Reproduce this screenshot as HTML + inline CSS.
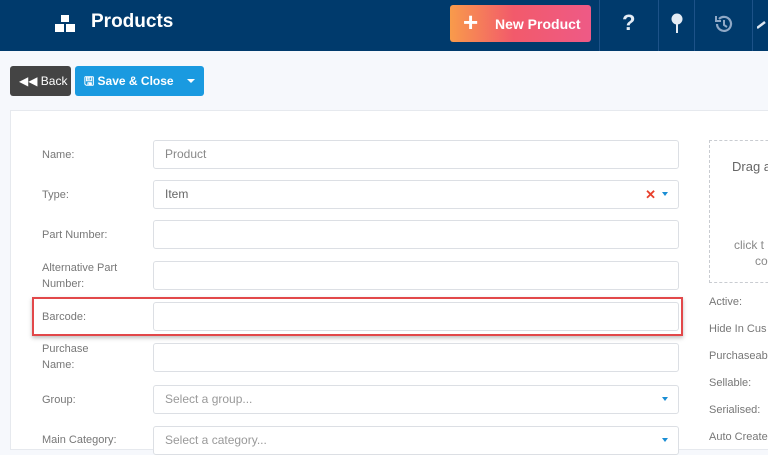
<!DOCTYPE html>
<html><head><style>
*{box-sizing:border-box;margin:0;padding:0}
body{width:768px;height:441px;overflow:hidden;background:#f6f8fc;font-family:"Liberation Sans",sans-serif;position:relative}
.hdr{position:absolute;left:0;top:0;width:768px;height:51px;background:#003a6c}
.title{position:absolute;left:91px;top:11px;color:#fff;font-size:19px;font-weight:bold}
.np{position:absolute;left:450px;top:5px;width:141px;height:37px;border-radius:3px;background:linear-gradient(90deg,#f89b4b,#f25a6b 45%,#ee5a86);color:#fff;font-weight:bold;font-size:14px}
.sep{position:absolute;top:0;width:1px;height:51px;background:#1d5288}
.btn{position:absolute;top:66px;height:30px;border-radius:3px;color:#fff;font-size:12px;font-weight:bold;line-height:30px}
.card{position:absolute;left:10px;top:110px;width:770px;height:340px;background:#fff;border:1px solid #e6e9ee}
.lbl{position:absolute;left:42px;color:#777;font-size:11px;line-height:16px}
.in{position:absolute;left:153px;width:526px;height:29px;border:1px solid #dcdfe4;border-radius:3px;background:#fff;color:#888;font-size:12px;padding-left:11px;line-height:27px}
.rl{position:absolute;left:709px;color:#777;font-size:11px}
.car{position:absolute;right:10px;top:11px;width:0;height:0;border-left:3.5px solid transparent;border-right:3.5px solid transparent;border-top:4px solid #1a8ed4}
</style></head><body>
<div class="hdr">
<svg style="position:absolute;left:55px;top:14px" width="22" height="20" viewBox="0 0 22 20"><rect x="6" y="1" width="8" height="7" fill="#fff"/><rect x="0" y="10" width="9" height="8" fill="#fff"/><rect x="11" y="10" width="9" height="8" fill="#fff"/></svg>
<div class="title">Products</div>
<div class="np"><span style="position:absolute;left:13px;top:3px;font-size:26px;line-height:28px;font-weight:bold">+</span><span style="position:absolute;left:45px;top:11px">New Product</span></div>
<div class="sep" style="left:599px"></div><div class="sep" style="left:658px"></div><div class="sep" style="left:694px"></div><div class="sep" style="left:752px"></div>
<div style="position:absolute;left:622px;top:10px;color:#e4ecf5;font-size:22px;font-weight:bold">?</div>
<svg style="position:absolute;left:670px;top:13px" width="14" height="22" viewBox="0 0 14 22"><circle cx="7" cy="6" r="5.5" fill="#e4ecf5"/><rect x="6" y="10" width="2" height="10" fill="#e4ecf5"/></svg>
<svg style="position:absolute;left:713px;top:13px" width="22" height="22" viewBox="0 0 22 22"><path d="M4 11a7 7 0 1 0 2-5" fill="none" stroke="#8fa8c6" stroke-width="2.2"/><path d="M3 3v5h5" fill="none" stroke="#8fa8c6" stroke-width="2"/><path d="M11 7v5l3 2" fill="none" stroke="#8fa8c6" stroke-width="2"/></svg>
<svg style="position:absolute;left:757px;top:18px" width="11" height="12"><path d="M0 10l8-6" stroke="#dde6f0" stroke-width="2.5"/></svg>
</div>
<div class="btn" style="left:10px;width:61px;background:#444;padding-left:9px;font-weight:normal">◀◀ Back</div>
<div class="btn" style="left:75px;width:129px;background:#1a9ae0;padding-left:9px">🖫 Save &amp; Close<span style="position:absolute;left:112px;top:13px;border-left:4px solid transparent;border-right:4px solid transparent;border-top:4px solid #fff"></span></div>
<div class="card"></div>
<div class="lbl" style="top:147px">Name:</div><div class="in" style="top:140px">Product</div>
<div class="lbl" style="top:187px">Type:</div><div class="in" style="top:180px;color:#666">Item<span style="position:absolute;right:22px;top:0;color:#e8402c;font-weight:bold;font-size:13px">✕</span><span class="car"></span></div>
<div class="lbl" style="top:227px">Part Number:</div><div class="in" style="top:220px"></div>
<div class="lbl" style="top:260px">Alternative Part<br>Number:</div><div class="in" style="top:261px"></div>
<div class="lbl" style="top:309px">Barcode:</div><div class="in" style="top:302px"></div>
<div class="lbl" style="top:341px">Purchase<br>Name:</div><div class="in" style="top:343px"></div>
<div class="lbl" style="top:392px">Group:</div><div class="in" style="top:385px;color:#999">Select a group...<span class="car"></span></div>
<div class="lbl" style="top:432px">Main Category:</div><div class="in" style="top:426px;color:#999">Select a category...<span class="car"></span></div>
<div style="position:absolute;left:32px;top:297px;width:651px;height:39px;border:2.5px solid #e2484a;box-shadow:0 2px 4px rgba(0,0,0,.25)"></div>
<div style="position:absolute;left:709px;top:140px;width:80px;height:143px;border:1px dashed #c9ccd1;color:#666;font-size:13px">
<div style="position:absolute;left:22px;top:18px">Drag a</div>
<div style="position:absolute;left:24px;top:97px;font-size:12px;color:#888">click t</div>
<div style="position:absolute;left:45px;top:113px;font-size:12px;color:#888">co</div></div>
<div class="rl" style="top:296px">Active:</div>
<div class="rl" style="top:323px">Hide In Cus</div>
<div class="rl" style="top:350px">Purchaseab</div>
<div class="rl" style="top:377px">Sellable:</div>
<div class="rl" style="top:404px">Serialised:</div>
<div class="rl" style="top:431px">Auto Create</div>
</body></html>
